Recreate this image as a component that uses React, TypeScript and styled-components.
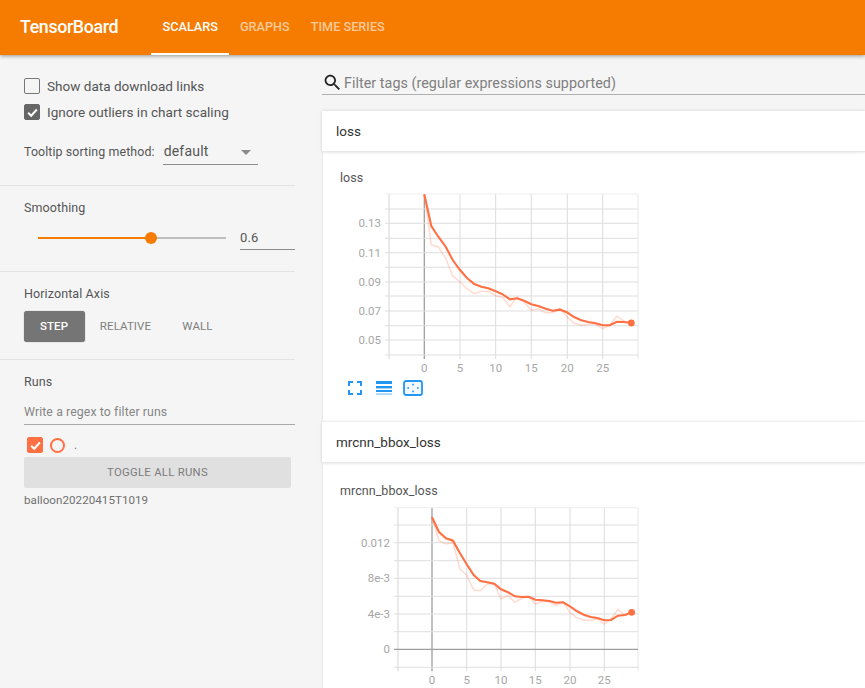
import React from "react";
import styled, { createGlobalStyle } from "styled-components";

const Global = createGlobalStyle`
  html, body { margin: 0; padding: 0; height: 100%; background: #f5f5f5; overflow: hidden; }
  body { font-family: Roboto, "Liberation Sans", sans-serif; color: #212121; }
  #root { height: 100%; }
`;

const Page = styled.div`
  width: 865px; height: 688px; display: flex; flex-direction: column; overflow: hidden; background: #f5f5f5;
`;
const Toolbar = styled.header`
  height: 55px; flex: none; background: #f57c00; display: flex; align-items: stretch; padding-left: 20px;
  box-shadow: 0 1px 4px rgba(0,0,0,.4); position: relative; z-index: 2; box-sizing: border-box;
`;
const Brand = styled.div`
  color: #fff; font-size: 17.8px; font-weight: 500; line-height: 54px; width: 131px; letter-spacing: -0.35px;
`;
const Tab = styled.div<{ $active?: boolean }>`
  padding: 0 ${p => (p.$active ? "11.5px" : "10.5px")}; box-sizing: border-box;
  font-size: 12.7px; font-weight: 500; line-height: 54px; white-space: nowrap;
  color: ${p => (p.$active ? "#fff" : "rgba(255,255,255,.6)")};
  border-bottom: 2px solid ${p => (p.$active ? "#fff" : "transparent")};
`;
const Body = styled.div`
  flex: 1; display: flex; min-height: 0;
`;
const Sidebar = styled.aside`
  width: 295px; flex: none; font-size: 14px;
`;
const Section = styled.section<{ $h: number; $top: number }>`
  height: ${p => p.$h}px; box-sizing: border-box; padding: ${p => p.$top}px 0 0 24px; border-bottom: 1px solid #e3e3e3;
  &:last-child { border-bottom: 0; }
`;
const CheckRow = styled.div`
  display: flex; align-items: center; height: 26px; gap: 7px; font-size: 13.55px; color: #555;
`;
const Box = styled.span<{ $on?: boolean; $color?: string }>`
  width: 16px; height: 16px; border-radius: 2px; box-sizing: border-box; display: inline-flex; align-items: center; justify-content: center;
  border: 1.5px solid ${p => (p.$on ? p.$color || "#666" : "#777")};
  background: ${p => (p.$on ? p.$color || "#666" : "transparent")};
  svg { display: block; }
`;
const Check = ({ size = 13 }: { size?: number }) => (
  <svg width={size} height={size} viewBox="0 0 24 24" fill="none" stroke="#fff" strokeWidth="3.6">
    <path d="M4 12.5l5.5 5.5L20 6.5" />
  </svg>
);
const SortRow = styled.div`
  display: flex; align-items: center; margin-top: 13px; font-size: 12.4px; color: #555; letter-spacing: .1px;
`;
const Dropdown = styled.div`
  margin-left: 8px; width: 95px; height: 27px; box-sizing: border-box; border-bottom: 1px solid #8c8c8c; display: flex;
  align-items: center; justify-content: space-between; font-size: 14px; color: #555; padding: 0 7px 1px 1px; letter-spacing: .2px;
`;
const Caret = styled.span`
  width: 0; height: 0; border-left: 5px solid transparent; border-right: 5px solid transparent; border-top: 5px solid #8a8a8a; margin-top: 3px;
`;
const SectionTitle = styled.div`
  font-size: 12.5px; color: #555; line-height: 16px; letter-spacing: .1px;
`;
const SliderRow = styled.div`
  display: flex; align-items: flex-start; padding-left: 14px; margin-top: 5px;
`;
const Track = styled.div`
  width: 188px; height: 2px; margin-top: 16px; background: #bdbdbd; position: relative;
`;
const Fill = styled.div`
  height: 2px; background: #f57c00;
`;
const Thumb = styled.span`
  position: absolute; top: -5px; width: 12px; height: 12px; border-radius: 50%; background: #f57c00; margin-left: -6px;
`;
const ValueBox = styled.div`
  margin-left: 14px; width: 55px; height: 29px; box-sizing: border-box; border-bottom: 1px solid #8c8c8c; font-size: 13px; color: #555; line-height: 34px; letter-spacing: .1px;
`;
const AxisButtons = styled.div`
  display: flex; margin-top: 9px; margin-left: -0.5px;
`;
const AxisButton = styled.div<{ $active?: boolean; $w: number }>`
  width: ${p => p.$w}px; height: 31px; border-radius: 3px; text-align: center; line-height: 31px; font-size: 11.5px; letter-spacing: .1px;
  font-weight: ${p => (p.$active ? 500 : 400)};
  color: ${p => (p.$active ? "#fff" : "#808080")};
  background: ${p => (p.$active ? "#757575" : "transparent")};
  box-shadow: ${p => (p.$active ? "0 0 1px rgba(0,0,0,.5)" : "none")};
`;
const RegexInput = styled.div`
  margin-top: 13px; height: 22px; box-sizing: border-box; border-bottom: 1.5px solid #a8a8a8; font-size: 12.3px; color: #858585; line-height: 18px; letter-spacing: .1px;
`;
const RunRow = styled.div`
  display: flex; align-items: center; height: 32px; padding-left: 3px; gap: 7px; margin-top: 4px; font-size: 12px; color: #777;
`;
const Ring = styled.span`
  width: 15px; height: 15px; box-sizing: border-box; border-radius: 50%; border: 2px solid #ff7043; margin-right: 2px;
`;
const ToggleButton = styled.div`
  width: 267px; height: 31px; background: #e0e0e0; border-radius: 2px; text-align: center; line-height: 31px; font-size: 11.3px; color: #7c7c7c; letter-spacing: .3px; margin-top: -4px;
`;
const RunName = styled.div`
  margin-top: 4px; font-size: 11.6px; color: #707070; line-height: 16px; letter-spacing: .05px;
`;
const Main = styled.main`
  flex: 1; min-width: 0; margin-left: 27px; display: flex; flex-direction: column;
`;
const FilterBar = styled.div`
  flex: none; display: flex; align-items: center; height: 29px; margin: 11px 0 16px; padding-top: 5px; box-sizing: border-box; border-bottom: 1.5px solid #b0b0b0; gap: 1px;
  font-size: 14.3px; color: #808080; letter-spacing: .05px;
  svg { margin-top: -1px; flex: none; }
`;
const CategoryHeader = styled.div`
  height: 41px; flex: none; background: #fff; box-sizing: border-box; padding-left: 14px; line-height: 41px; font-size: 13.5px; color: #333;
  border-bottom: 1px solid #e8e8e8; box-shadow: 0 0 3px rgba(0,0,0,.16); position: relative;
`;
const CategoryBody = styled.div<{ $h: number; $pad: number }>`
  height: ${p => p.$h}px; flex: none; margin-left: 1px; background: #fff; box-sizing: border-box; padding: ${p => p.$pad}px 0 0 17px; box-shadow: 0 1px 2px rgba(0,0,0,.12);
`;
const ChartTitle = styled.div`
  font-size: 12.5px; color: #555; line-height: 16px; letter-spacing: .05px;
`;
const ChartSvg = styled.svg`
  display: block;
`;
const IconRow = styled.div`
  display: flex; align-items: center; gap: 9px; margin: 0 0 0 3px;
  svg { display: block; }
`;

type P = [number, number];
const smooth1: P[] = [[283,103],[304,198],[325,230],[347,260],[368,300],[390,330],[411,354],[433,372],[454,380],[475,385],[497,394],[518,403],[540,418],[561,415],[582,422],[604,433],[625,438],[647,446],[668,452],[690,449],[711,457],[732,471],[754,481],[775,486],[797,490],[818,496],[839,496],[861,485],[882,486],[904,489]];
const raw1: P[] = [[283,103],[304,255],[325,261],[347,295],[368,348],[390,365],[411,387],[433,401],[454,394],[475,394],[497,407],[518,412],[540,440],[561,410],[582,425],[604,451],[625,447],[647,458],[668,458],[690,445],[711,470],[732,490],[754,496],[775,493],[797,493],[818,506],[839,496],[861,468],[882,484],[904,489]];
const smooth2: P[] = [[306,142],[327,186],[348,205],[369,212],[390,250],[410,283],[431,315],[451,333],[472,337],[493,341],[513,358],[534,367],[555,379],[575,381],[596,380],[616,389],[637,391],[658,393],[678,398],[699,397],[720,409],[740,423],[761,434],[782,441],[802,444],[823,451],[843,450],[864,437],[885,435],[905,427]];
const raw2: P[] = [[306,142],[327,212],[348,222],[369,218],[390,297],[410,316],[431,360],[451,362],[472,342],[493,342],[513,386],[534,376],[555,397],[575,385],[596,380],[616,402],[637,394],[658,395],[678,407],[699,395],[720,428],[740,443],[761,451],[782,451],[802,447],[823,462],[843,447],[864,418],[885,436],[905,427]];

const pts = (a: P[], ox: number, oy: number) => a.map(([x, y]) => `${(x / 3 + ox).toFixed(1)},${(y / 3 + oy).toFixed(1)}`).join(" ");

interface ChartProps {
  originX: number; originY: number;
  left: number; right: number; top: number; bottom: number;
  xTicks: [string, number][]; grid: number[]; yLabels: [string, number][];
  zeroX: number; zeroY?: number;
  smooth: P[]; raw: P[]; zoomX: number; zoomY: number; h: number;
}
const Chart = (c: ChartProps) => {
  const ox = c.zoomX - c.originX, oy = c.zoomY - c.originY;
  const last = c.smooth[c.smooth.length - 1];
  const t = (y: number) => y - c.originY, l = (x: number) => x - c.originX;
  return (
    <ChartSvg width={310} height={c.h}>
      {c.xTicks.map(([, x]) => <line key={x} x1={l(x)} x2={l(x)} y1={t(c.top)} y2={t(c.bottom) + 4} stroke={x === c.zeroX ? "#9e9e9e" : "#dcdcdc"} strokeWidth={x === c.zeroX ? 1.3 : 1} />)}
      <line x1={l(c.left)} x2={l(c.left)} y1={t(c.top)} y2={t(c.bottom) + 4} stroke="#d4d4d4" />
      <line x1={l(c.right)} x2={l(c.right)} y1={t(c.top)} y2={t(c.bottom) + 4} stroke="#e8e8e8" />
      {c.grid.map(y => <line key={y} x1={l(c.left) - 4} x2={l(c.right)} y1={t(y)} y2={t(y)} stroke={y === c.zeroY ? "#9e9e9e" : "#dedede"} strokeWidth={y === c.zeroY ? 1.3 : 1} />)}
      <line x1={l(c.left) - 4} x2={l(c.right)} y1={t(c.top)} y2={t(c.top)} stroke="#eeeeee" />
      {c.yLabels.map(([s, y]) => <text key={s} x={l(c.left) - 8} y={t(y) + 4} textAnchor="end" fontSize="11.5" fill="#a6a6a6" fontFamily="Roboto, sans-serif">{s}</text>)}
      {c.xTicks.map(([s, x]) => <text key={s} x={l(x)} y={t(c.bottom) + 17} textAnchor="middle" fontSize="11.5" fill="#a6a6a6" fontFamily="Roboto, sans-serif">{s}</text>)}
      <polyline points={pts(c.raw, ox, oy)} fill="none" stroke="#ff7043" strokeOpacity=".25" strokeWidth="1.5" />
      <polyline points={pts(c.smooth, ox, oy)} fill="none" stroke="#ff7043" strokeWidth="2.1" />
      <circle cx={last[0] / 3 + ox} cy={last[1] / 3 + oy} r="3.4" fill="#ff7043" />
    </ChartSvg>
  );
};

const Blue = "#2196f3";

export default function App() {
  return (
    <Page>
      <Global />
      <Toolbar>
        <Brand>TensorBoard</Brand>
        <Tab $active>SCALARS</Tab>
        <Tab>GRAPHS</Tab>
        <Tab>TIME SERIES</Tab>
      </Toolbar>
      <Body>
        <Sidebar>
          <Section $h={131} $top={18}>
            <CheckRow><Box /> Show data download links</CheckRow>
            <CheckRow><Box $on><Check /></Box> Ignore outliers in chart scaling</CheckRow>
            <SortRow>Tooltip sorting method:<Dropdown>default<Caret /></Dropdown></SortRow>
          </Section>
          <Section $h={86} $top={14}>
            <SectionTitle>Smoothing</SectionTitle>
            <SliderRow>
              <Track><Fill style={{ width: "60%" }} /><Thumb style={{ left: "60%" }} /></Track>
              <ValueBox>0.6</ValueBox>
            </SliderRow>
          </Section>
          <Section $h={88} $top={14}>
            <SectionTitle>Horizontal Axis</SectionTitle>
            <AxisButtons>
              <AxisButton $active $w={61}>STEP</AxisButton>
              <AxisButton $w={82}>RELATIVE</AxisButton>
              <AxisButton $w={62}>WALL</AxisButton>
            </AxisButtons>
          </Section>
          <Section $h={240} $top={14}>
            <SectionTitle>Runs</SectionTitle>
            <RegexInput>Write a regex to filter runs</RegexInput>
            <RunRow><Box $on $color="#ff7043"><Check /></Box><Ring /> .</RunRow>
            <ToggleButton>TOGGLE ALL RUNS</ToggleButton>
            <RunName>balloon20220415T1019</RunName>
          </Section>
        </Sidebar>
        <Main>
          <FilterBar>
            <svg width="21" height="21" viewBox="0 0 24 24" fill="#222"><path d="M15.5 14h-.79l-.28-.27C15.41 12.59 16 11.11 16 9.5 16 5.91 13.09 3 9.5 3S3 5.91 3 9.5 5.91 16 9.5 16c1.61 0 3.09-.59 4.23-1.57l.27.28v.79l5 4.99L20.49 19l-4.99-5zm-6 0C7.01 14 5 11.99 5 9.5S7.01 5 9.5 5 14 7.01 14 9.5 11.99 14 9.5 14z" /></svg>
            Filter tags (regular expressions supported)
          </FilterBar>
          <CategoryHeader>loss</CategoryHeader>
          <CategoryBody $h={270} $pad={18}>
            <ChartTitle>loss</ChartTitle>
            <Chart originX={340} originY={186} left={389} right={638} top={194} bottom={355}
              xTicks={[["0",424.3],["5",460],["10",495.7],["15",531.3],["20",567.3],["25",602.7]]}
              grid={[209,223.3,238.3,252.7,267.3,282,296,311,325.7,340,355]}
              yLabels={[["0.13",223.3],["0.11",252.7],["0.09",282],["0.07",311],["0.05",340]]}
              zeroX={424.3} smooth={smooth1} raw={raw1} zoomX={330} zoomY={160} h={190} />
            <IconRow>
              <svg width="24" height="24" viewBox="0 0 24 24" fill={Blue}><path d="M7 14H5v5h5v-2H7v-3zm-2-4h2V7h3V5H5v5zm12 7h-3v2h5v-5h-2v3zM14 5v2h3v3h2V5h-5z" /></svg>
              <svg width="16" height="16" viewBox="0 0 16 16"><rect y="1" width="16" height="3" fill={Blue} /><rect y="6" width="16" height="2.4" fill={Blue} /><rect y="10" width="16" height="2" fill={Blue} /><rect y="13.4" width="16" height="1.4" fill={Blue} fillOpacity=".5" /></svg>
              <svg width="22" height="16" viewBox="0 0 22 16" fill="none"><rect x="3" y="1" width="18" height="14" rx="2" stroke={Blue} strokeWidth="1.8" fill="#f1f8fe" /><rect x="11.2" y="3.8" width="1.6" height="1.6" fill={Blue} /><rect x="11.2" y="10.6" width="1.6" height="1.6" fill={Blue} /><rect x="6.4" y="7.2" width="1.6" height="1.6" fill={Blue} /><rect x="16" y="7.2" width="1.6" height="1.6" fill={Blue} /></svg>
            </IconRow>
          </CategoryBody>
          <CategoryHeader>mrcnn_bbox_loss</CategoryHeader>
          <CategoryBody $h={230} $pad={20}>
            <ChartTitle>mrcnn_bbox_loss</ChartTitle>
            <Chart originX={340} originY={499} left={398} right={638} top={507.7} bottom={667.3}
              xTicks={[["0",432],["5",466.7],["10",501],["15",535.3],["20",570],["25",604.3]]}
              grid={[525,542.7,560.7,578.3,596.3,614,631.7,649.3,667.3]}
              yLabels={[["0.012",542.7],["8e-3",578.3],["4e-3",614],["0",649.3]]}
              zeroX={432} zeroY={649.3} smooth={smooth2} raw={raw2} zoomX={330} zoomY={470} h={189} />
          </CategoryBody>
        </Main>
      </Body>
    </Page>
  );
}
